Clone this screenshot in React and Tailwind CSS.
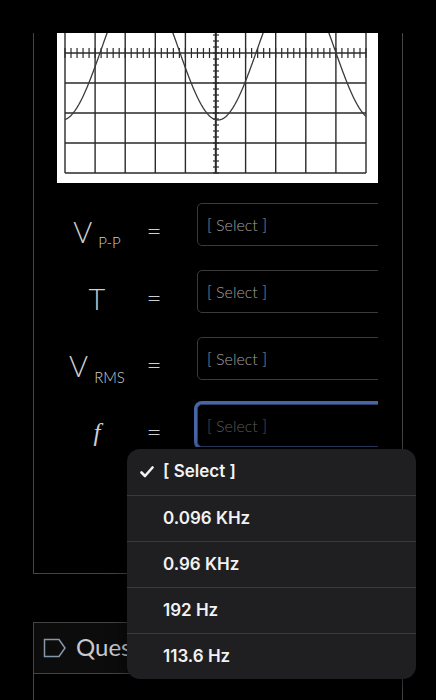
import React from "react";

const Scope = () => {
  // grid columns / rows (svg coords, origin at the white card's top-left)
  const xs = Array.from({ length: 11 }, (_, i) => 8 + i * 30.1);
  const ys = [-10, 20, 50, 80, 110, 140];

  const hTicks = [];
  for (let x = 8; x <= 309; x += 6.02) hTicks.push(x);
  const vTicks = [];
  for (let y = -10; y <= 140; y += 6) vTicks.push(y);

  const pts = [];
  for (let x = 8; x <= 309; x += 1) {
    const y = 17 + 70 * Math.cos((2 * Math.PI * (x - 161)) / 156);
    pts.push(`${x},${y.toFixed(2)}`);
  }

  return (
    <svg width="321" height="150" viewBox="0 0 321 150" className="block">
      <rect x="0" y="0" width="321" height="150" fill="#ffffff" />
      {xs.map((x, i) => (
        <line key={"v" + i} x1={x} y1={-10} x2={x} y2={140} stroke="#2a2a2a" strokeWidth="1.4" />
      ))}
      {ys.map((y, i) => (
        <line key={"h" + i} x1={8} y1={y} x2={309} y2={y} stroke="#2a2a2a" strokeWidth="1.4" />
      ))}
      {hTicks.map((x, i) => (
        <line key={"ht" + i} x1={x} y1={15} x2={x} y2={25} stroke="#2a2a2a" strokeWidth="1.2" />
      ))}
      {vTicks.map((y, i) => (
        <line key={"vt" + i} x1={156} y1={y} x2={162} y2={y} stroke="#2a2a2a" strokeWidth="1.2" />
      ))}
      <line x1={159} y1={-10} x2={159} y2={140} stroke="#2a2a2a" strokeWidth="1.6" />
      <polyline points={pts.join(" ")} fill="none" stroke="#3a3a3a" strokeWidth="1.3" />
    </svg>
  );
};

const SelectBox = ({ focused }) => (
  <div
    className={
      focused
        ? "h-[43px] w-[240px] shrink-0 rounded-[5px] border border-[#2e3f63] ring-[3px] ring-[#4766a5] bg-black flex items-center pl-[9px] text-[16px] font-light text-[#5a5a5a]"
        : "h-[43px] w-[240px] shrink-0 rounded-[5px] border border-[#3a3a3a] bg-black flex items-center pl-[9px] text-[16px] font-light text-[#a0a0a0]"
    }
  >
    [ Select ]
  </div>
);

const Row = ({ label, focused }) => (
  <div className="flex items-end h-[43px]">
    <div className="w-[80px] shrink-0 flex justify-center items-end text-[#cfcfcf] font-light leading-none">
      {label}
    </div>
    <div className="w-[34px] shrink-0 text-center text-[26px] font-light leading-none text-[#cfcfcf] pb-[3px]">
      =
    </div>
    <div className="ml-[26px] self-start">
      <SelectBox focused={focused} />
    </div>
  </div>
);

const options = ["[ Select ]", "0.096 KHz", "0.96 KHz", "192 Hz", "113.6 Hz"];

export default function App() {
  return (
    <div className="relative w-[436px] h-[700px] overflow-hidden bg-black font-['Lato',sans-serif]">
      <div className="h-[33px]" />

      <div className="ml-[33px] w-[370px] h-[541px] border-x border-b border-[#444444] pl-[23px] pr-[24px]">
        <div className="w-[321px] overflow-hidden">
          <Scope />
          <div className="mt-[20px] flex flex-col gap-[24px]">
            <Row
              label={
                <span className="text-[29px]">
                  V<span className="relative top-[5px] ml-[6px] text-[15px]">P-P</span>
                </span>
              }
            />
            <Row label={<span className="text-[29px]">T</span>} />
            <Row
              label={
                <span className="text-[29px]">
                  V<span className="relative top-[6px] ml-[6px] text-[15px]">RMS</span>
                </span>
              }
            />
            <Row
              focused
              label={
                <span className="text-[25px] italic font-['Liberation_Serif',serif] pb-[2px]">f</span>
              }
            />
          </div>
        </div>
      </div>

      <div className="mt-[48px] ml-[33px] w-[370px] h-[200px] border border-[#444444]">
        <div className="h-[51px] bg-[#0c0c0c] border-b border-[#444444] flex items-center pl-[9px] gap-[9px]">
          <svg width="24" height="20" viewBox="0 0 24 20" className="shrink-0">
            <path d="M1.5 1.5 H16 L22 10 L16 18.5 H1.5 Z" fill="none" stroke="#8797aa" strokeWidth="1.5" />
          </svg>
          <span className="text-[24px] text-[#c6cacf] pb-[2px]">Question 6</span>
        </div>
      </div>

      <div className="absolute left-[127px] top-[449px] w-[289px] rounded-[13px] bg-[#1f1f21] shadow-[0_4px_18px_rgba(0,0,0,0.6)] overflow-hidden font-['Inter',sans-serif]">
        {options.map((o, i) => (
          <div
            key={o}
            className={
              i === 0
                ? "h-[46px] flex items-center text-[17px] font-semibold text-[#f2f2f2]"
                : "h-[46px] flex items-center border-t border-[#3a3a3c] text-[17px] font-semibold text-[#f2f2f2]"
            }
          >
            <div className="w-[36px] shrink-0 flex justify-end pr-[9px]">
              {i === 0 && (
                <svg width="14" height="12" viewBox="0 0 14 12">
                  <path d="M1.5 6.5 L5 10 L12.5 1.5" fill="none" stroke="#f2f2f2" strokeWidth="2.6" strokeLinecap="round" strokeLinejoin="round" />
                </svg>
              )}
            </div>
            <span>{o}</span>
          </div>
        ))}
      </div>
    </div>
  );
}
